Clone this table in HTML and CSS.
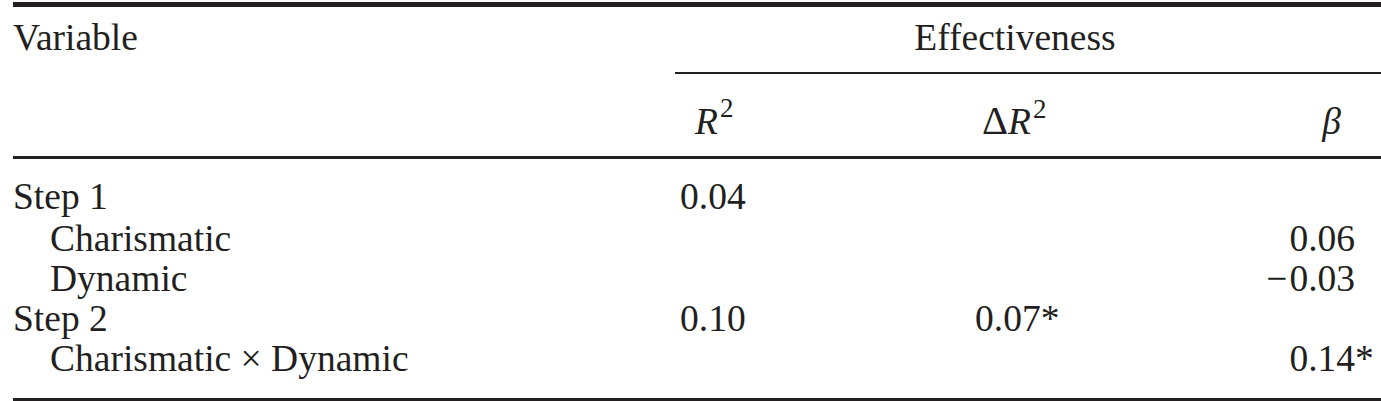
FILE: index.html
```html
<!DOCTYPE html>
<html lang="en">
<head>
<meta charset="utf-8">
<title>Regression table</title>
<link rel="stylesheet" href="styles.css">
</head>
<body>
<table class="reg-table">
  <colgroup>
    <col class="c-var">
    <col class="c-r2">
    <col class="c-dr2">
    <col class="c-beta">
  </colgroup>
  <thead>
    <tr>
      <th class="h-var" rowspan="2">Variable</th>
      <th class="h-group" colspan="3">Effectiveness</th>
    </tr>
    <tr class="h-sub">
      <th class="col-left h-r2"><i>R</i><sup>2</sup></th>
      <th class="col-left h-dr2"><span class="delta">Δ</span><i>R</i><sup>2</sup></th>
      <th class="col-right"><i class="beta">β</i></th>
    </tr>
  </thead>
  <tbody>
    <tr class="r-first">
      <td class="label">Step 1</td>
      <td class="col-left">0.04</td>
      <td class="col-left"></td>
      <td class="col-right"></td>
    </tr>
    <tr>
      <td class="label indent">Charismatic</td>
      <td class="col-left"></td>
      <td class="col-left"></td>
      <td class="col-right">0.06</td>
    </tr>
    <tr>
      <td class="label indent">Dynamic</td>
      <td class="col-left"></td>
      <td class="col-left"></td>
      <td class="col-right"><span class="minus">−</span>0.03</td>
    </tr>
    <tr>
      <td class="label">Step 2</td>
      <td class="col-left">0.10</td>
      <td class="col-left">0.07<span class="sig">*</span></td>
      <td class="col-right"></td>
    </tr>
    <tr class="r-last">
      <td class="label indent">Charismatic × Dynamic</td>
      <td class="col-left"></td>
      <td class="col-left"></td>
      <td class="col-right">0.14<span class="sig">*</span></td>
    </tr>
  </tbody>
</table>
</body>
</html>
```

FILE: styles.css
```css
html, body {
  margin: 0;
  background: #ffffff;
}

body {
  padding: 2px 0 0 13px;
  font-family: "Liberation Serif", "Times New Roman", serif;
  font-size: 37.5px;
  line-height: 40px;
  color: #231f20;
}

.reg-table {
  width: 1368px;
  table-layout: fixed;
  border-collapse: separate;
  border-spacing: 0;
  border-top: 5px solid #231f20;
  border-bottom: 3px solid #231f20;
}

.c-var { width: 662px; }
.c-r2 { width: 295px; }
.c-dr2 { width: 250px; }
.c-beta { width: 161px; }

th, td {
  padding: 0;
  font-weight: normal;
  white-space: nowrap;
}

.h-var {
  text-align: left;
  vertical-align: top;
  padding-top: 11px;
  border-bottom: 3px solid #231f20;
}

.h-group {
  text-align: center;
  padding: 11px 26px 14px 0;
  border-bottom: 2px solid #231f20;
}

.h-sub th {
  padding-top: 27px;
  padding-bottom: 14px;
  border-bottom: 3px solid #231f20;
}

.col-left {
  text-align: left;
  padding-left: 5px;
}

.col-right {
  text-align: right;
  padding-right: 26px;
}

.h-sub .h-r2 {
  padding-left: 20px;
}

.h-sub .h-dr2 {
  padding-left: 12px;
}

.label {
  text-align: left;
}

.indent {
  padding-left: 37px;
}

.r-first td {
  padding-top: 18px;
  padding-bottom: 2px;
}

.r-last td {
  padding-bottom: 19px;
}

sup {
  font-size: 0.72em;
  line-height: 0;
  vertical-align: 0.6em;
  margin-left: 2px;
}

.delta {
  font-size: 1.08em;
}

.beta {
  font-style: italic;
  margin-right: 14px;
}

.minus {
  margin-right: 2px;
}

.sig {
  margin-right: -0.5em;
}
```
